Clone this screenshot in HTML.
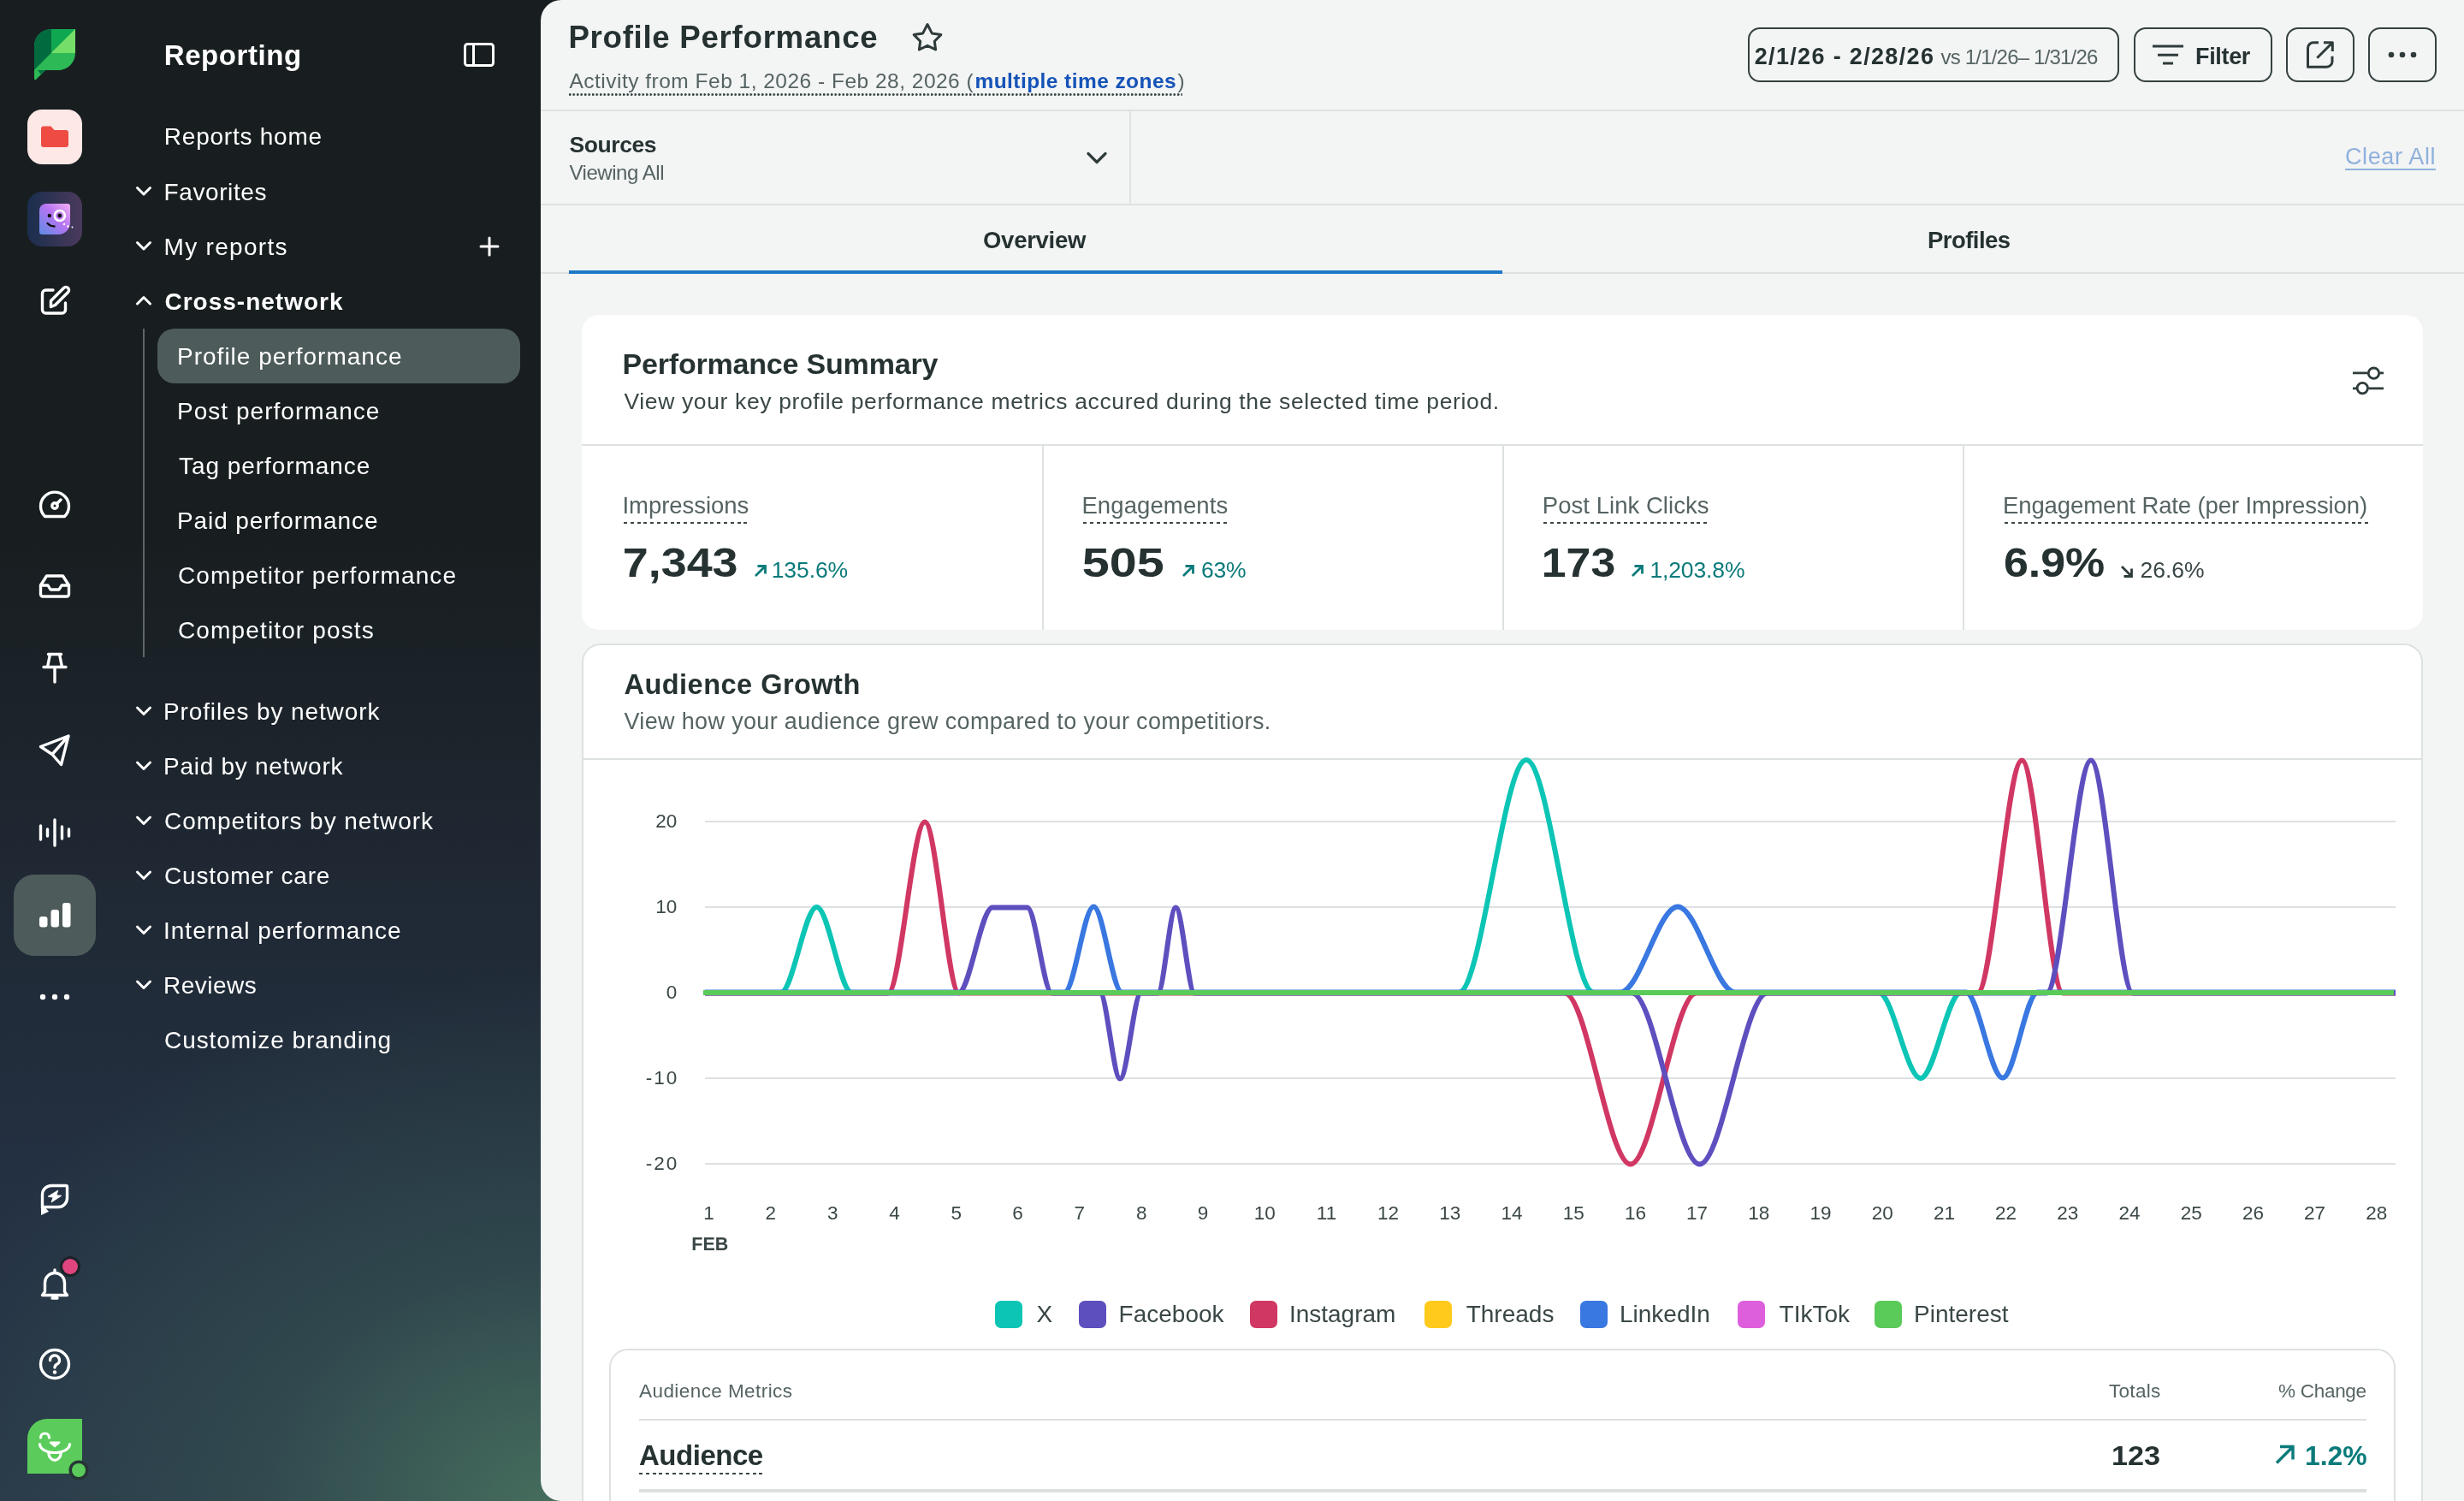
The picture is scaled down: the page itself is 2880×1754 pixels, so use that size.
<!DOCTYPE html>
<html><head><meta charset="utf-8"><style>
html,body{margin:0;padding:0;width:2880px;height:1754px;overflow:hidden;background:#181e20;font-family:"Liberation Sans",sans-serif}
.abs{position:absolute}
.t{position:absolute;white-space:nowrap;line-height:1}
.btn{position:absolute;box-sizing:border-box;border:2px solid #364141;border-radius:14px}
.hr{position:absolute;background:#dde1e1}
.dots{position:absolute;height:3px;background-image:radial-gradient(circle at 1.2px 1.5px,#3a4646 1.15px,rgba(58,70,70,0) 1.6px);background-size:4.5px 3px;background-repeat:repeat-x}
.dash{position:absolute;height:2px;background:repeating-linear-gradient(90deg,#3a4646 0 4px,rgba(0,0,0,0) 4px 7.8px)}
.sw{position:absolute;width:32px;height:32px;border-radius:7px;top:1520px}

</style></head><body>
<!-- sidebar background -->
<div class="abs" style="left:0;top:0;width:660px;height:1754px;background:
 radial-gradient(ellipse 760px 620px at 640px 1754px, rgba(74,118,96,0.85) 0%, rgba(60,96,86,0.45) 45%, rgba(40,60,70,0) 100%),
 linear-gradient(to bottom, #181e20 0%, #181e20 36%, #1f2833 58%, #243143 80%, #283649 100%);"></div>

<!-- logo -->
<svg class="abs" style="left:0;top:0" width="130" height="1754" viewBox="0 0 130 1754">
 <defs><clipPath id="lg"><path d="M40,54 A20,20 0 0 1 60,34 H88 V62 A20,20 0 0 1 68,82 H53 L42.5,92.5 Q40,95 40,91 Z"/></clipPath></defs>
 <g clip-path="url(#lg)">
  <rect x="30" y="30" width="70" height="70" fill="#2cb956"/>
  <polygon points="30,30 60,30 60,61.7 30,91.7" fill="#006b3f"/>
  <polygon points="60,30 92,30 92,30 60,61.7" fill="#0fa750"/>
  <polygon points="92,30 92,62 60,62 60,61.7" fill="#75de69"/>
  <polygon points="44,82 53,82 48,87" fill="#00713f"/>
 </g>
 <!-- red folder tile -->
 <rect x="32" y="128" width="64" height="64" rx="17" fill="#fde8e6"/>
 <path d="M48,150.5 a3,3 0 0 1 3,-3 H59.5 L63.5,152 H77 a3,3 0 0 1 3,3 V169 a3,3 0 0 1 -3,3 H51 a3,3 0 0 1 -3,-3 Z" fill="#ee4c43"/>
 <!-- purple tile -->
 <defs>
  <linearGradient id="pt" x1="0" y1="0" x2="1" y2="0"><stop offset="0" stop-color="#1a2e4d"/><stop offset="1" stop-color="#4b3a5c"/></linearGradient>
  <linearGradient id="pf" x1="0" y1="1" x2="1" y2="0"><stop offset="0" stop-color="#5c8ee6"/><stop offset="0.55" stop-color="#b773f2"/><stop offset="1" stop-color="#f0b0f0"/></linearGradient>
 </defs>
 <rect x="32" y="224" width="64" height="64" rx="17" fill="url(#pt)"/>
 <path d="M46,246 a8,8 0 0 1 8,-8 H79 a3,3 0 0 1 3,3 V260 a14,14 0 0 1 -14,14 H49 a3,3 0 0 1 -3,-3 Z" fill="url(#pf)"/>
 <circle cx="57.8" cy="252" r="2.2" fill="#111"/>
 <circle cx="69.8" cy="252" r="6" fill="none" stroke="#fff" stroke-width="2.6"/>
 <circle cx="69.8" cy="252" r="2.4" fill="#111"/>
 <path d="M55.5,261 Q59,264.5 63.5,264.5" fill="none" stroke="#111" stroke-width="2.4" stroke-linecap="round"/>
 <circle cx="75" cy="262" r="1.3" fill="#fff"/><circle cx="79.5" cy="264.5" r="1.3" fill="#fff"/><circle cx="84.5" cy="265.5" r="1" fill="#fff"/>
 <g fill="none" stroke="#fff" stroke-width="3.4" stroke-linecap="round" stroke-linejoin="round">
  <!-- compose -->
  <path d="M62,339 H53.5 a4,4 0 0 0 -4,4 V362 a4,4 0 0 0 4,4 H72.5 a4,4 0 0 0 4,-4 V354"/>
  <path d="M59.5,358.5 V351.5 L74.5,336.5 a3.5,3.5 0 0 1 5,5 L64.5,356.5 Z"/>
  <!-- gauge -->
  <path d="M52.5,603.5 H75.5 A16.5,16.5 0 1 0 52.5,603.5 Z"/>
  <circle cx="64" cy="591" r="3.2"/>
  <path d="M66.5,588.5 L71,584"/>
  <!-- inbox -->
  <path d="M47.5,684 L54.5,673 H73.5 L80.5,684 V694.5 a2.5,2.5 0 0 1 -2.5,2.5 H50 a2.5,2.5 0 0 1 -2.5,-2.5 Z"/>
  <path d="M47.5,684 H56 L59,689 H69 L72,684 H80.5"/>
  <!-- pin -->
  <path d="M56.5,764.5 H71.5 M58.5,764.5 L55.5,779.5 M69.5,764.5 L72.5,779.5 M51,779.5 H77 M64,779.5 V797"/>
  <!-- send -->
  <path d="M47.5,872.5 L80,860 L71.5,893.5 L61,881.5 Z M61,881.5 L80,860"/>
  <!-- waveform -->
  <path d="M47.5,965 V981 M55.5,969 V977 M64,958 V988 M72.5,966 V980 M80.5,969 V977"/>
  <!-- lightning chat -->
  <path d="M49.5,1412 V1396 a10.5,10.5 0 0 1 10.5,-10.5 H77 a1.5,1.5 0 0 1 1.5,1.5 V1400 a10.5,10.5 0 0 1 -10.5,10.5 H50"/>
  <!-- bell -->
  <path d="M49.5,1513.5 H78.5 L75.5,1509.5 V1499 a11.5,11.5 0 0 0 -23,0 V1509.5 Z M64,1484 V1487 M61,1517 H67"/>
  <!-- help -->
  <circle cx="64" cy="1594" r="16.5"/>
  <path d="M58.5,1589.5 a5.5,5.5 0 1 1 8,4.8 Q64,1595.8 64,1598"/>
 </g>
 <path d="M67.8,1391 L56,1398.2 L62,1399.2 L60,1405 L72,1397.2 L66,1396.8 Z" fill="#fff" stroke="#fff" stroke-width="0.8" stroke-linejoin="round"/>
 <path d="M48,1410.5 L53.5,1412 L57,1415.8 L48,1420 Z" fill="#fff"/>
 <circle cx="64" cy="1603.5" r="2.2" fill="#fff"/>
 <!-- bell dot -->
 <circle cx="82" cy="1480" r="12" fill="#1b2329"/>
 <circle cx="82" cy="1480" r="9" fill="#e0457f"/>
 <!-- active tile -->
 <rect x="16" y="1022" width="96" height="95" rx="24" fill="#4e5b5b"/>
 <rect x="46" y="1071" width="9.5" height="12.5" rx="3" fill="#fff"/>
 <rect x="59.5" y="1063" width="9.5" height="20.5" rx="3" fill="#fff"/>
 <rect x="73" y="1055" width="9.5" height="28.5" rx="3" fill="#fff"/>
 <!-- dots -->
 <circle cx="50" cy="1165" r="3.2" fill="#fff"/><circle cx="64" cy="1165" r="3.2" fill="#fff"/><circle cx="78" cy="1165" r="3.2" fill="#fff"/>
 <!-- avatar -->
 <path d="M32,1681 a23,23 0 0 1 23,-23 H96 V1705 a17,17 0 0 1 -17,17 H32 Z" fill="#5bcc5b"/>
 <g fill="none" stroke="#fff" stroke-width="3.2" stroke-linecap="round">
  <path d="M47.5,1680 a5,5 0 0 1 10,0"/>
  <path d="M46.5,1687.5 a17.5,10 0 0 0 35,0"/>
  <path d="M56.8,1697.8 a7.2,8.5 0 0 0 14.4,0"/>
 </g>
 <path d="M58.5,1684.5 H70 Q71,1685 70,1686.5 L64,1691.5 L58,1686.5 Q57.5,1685 58.5,1684.5 Z" fill="#fff"/>
 <circle cx="92" cy="1718" r="11.5" fill="#263436"/>
 <circle cx="92" cy="1718" r="8" fill="#5acb5a"/>
</svg>

<!-- sidebar nav decorations -->
<svg class="abs" style="left:130px;top:0" width="500" height="1300" viewBox="130 0 500 1300">
 <g fill="none" stroke="#fff" stroke-width="3" stroke-linecap="round" stroke-linejoin="round">
  <rect x="543.5" y="51.5" width="33" height="25" rx="3"/>
  <path d="M553.5,52 V76"/>
  <path d="M160.5,219.5 L168,227 L175.5,219.5"/>
  <path d="M160.5,283.5 L168,291 L175.5,283.5"/>
  <path d="M160.5,355 L168,347.5 L175.5,355"/>
  <path d="M572,278 V298 M562,288 H582"/>
  <path d="M160.5,827 L168,834.5 L175.5,827"/>
  <path d="M160.5,891 L168,898.5 L175.5,891"/>
  <path d="M160.5,955 L168,962.5 L175.5,955"/>
  <path d="M160.5,1019 L168,1026.5 L175.5,1019"/>
  <path d="M160.5,1083 L168,1090.5 L175.5,1083"/>
  <path d="M160.5,1147 L168,1154.5 L175.5,1147"/>
 </g>
 <rect x="167" y="384" width="2" height="384" fill="#5d6669"/>
 <rect x="184" y="384" width="424" height="64" rx="20" fill="#4e5b5b"/>
</svg>

<!-- main panel -->
<div class="abs" style="left:632px;top:0;width:2248px;height:1754px;background:#f3f4f4;border-radius:24px 0 0 24px"></div>
<div class="hr" style="left:632px;top:128px;width:2248px;height:2px"></div>
<div class="hr" style="left:1320px;top:130px;width:2px;height:108px"></div>
<div class="hr" style="left:632px;top:238px;width:2248px;height:2px"></div>
<div class="hr" style="left:632px;top:318px;width:2248px;height:2px"></div>
<div class="abs" style="left:665px;top:316px;width:1091px;height:4px;background:#1f78c6"></div>
<div class="dots" style="left:665px;top:109px;width:717px"></div>

<!-- header buttons -->
<div class="btn" style="left:2043px;top:32px;width:434px;height:64px"></div>
<div class="btn" style="left:2494px;top:32px;width:162px;height:64px"></div>
<div class="btn" style="left:2672px;top:32px;width:80px;height:64px"></div>
<div class="btn" style="left:2768px;top:32px;width:80px;height:64px"></div>
<svg class="abs" style="left:0;top:0" width="2880" height="330" viewBox="0 0 2880 330">
 <g fill="none" stroke="#2f3b3b" stroke-width="3" stroke-linejoin="round">
  <path d="M1084,28.5 L1089.3,38.9 L1099.8,40.6 L1092.3,48.3 L1093.6,58 L1084,53.3 L1074.4,58 L1075.7,48.3 L1068.2,40.6 L1078.7,38.9 Z" stroke-linejoin="round"/>
  <path d="M2516,54 H2552 M2522,64.3 H2546 M2528,74 H2540"/>
  <path d="M2710,49.7 H2704 a6.5,6.5 0 0 0 -6.5,6.5 V78.2 H2719.5 a6.5,6.5 0 0 0 6.5,-6.5 V65.8"/>
  <path d="M2716,49.7 H2726.3 V60 M2726.3,49.7 L2708.3,67.7"/>
  <path d="M1272,179.5 L1282,189.5 L1292,179.5" stroke-width="3.2" stroke-linecap="round"/>
 </g>
 <circle cx="2795" cy="64" r="3.3" fill="#2f3b3b"/><circle cx="2808" cy="64" r="3.3" fill="#2f3b3b"/><circle cx="2821" cy="64" r="3.3" fill="#2f3b3b"/>
 <rect x="2741" y="197" width="106" height="2" fill="#8fb1dc"/>
</svg>

<!-- performance summary card -->
<div class="abs" style="left:680px;top:368px;width:2152px;height:368px;background:#fff;border-radius:20px"></div>
<div class="hr" style="left:680px;top:519px;width:2152px;height:2px"></div>
<div class="hr" style="left:1218px;top:521px;width:2px;height:215px"></div>
<div class="hr" style="left:1756px;top:521px;width:2px;height:215px"></div>
<div class="hr" style="left:2294px;top:521px;width:2px;height:215px"></div>
<div class="dash" style="left:729px;top:610px;width:146px"></div>
<div class="dash" style="left:1266px;top:610px;width:169px"></div>
<div class="dash" style="left:1804px;top:610px;width:194px"></div>
<div class="dash" style="left:2343px;top:610px;width:425px"></div>
<svg class="abs" style="left:0;top:330px" width="2880" height="560" viewBox="0 330 2880 560">
 <g fill="none" stroke="#2f3b3b" stroke-width="2.8">
  <path d="M2750,435.8 H2767.3 M2781.7,435.8 H2786 M2750,453.8 H2754 M2768.5,453.8 H2786"/>
  <circle cx="2774.5" cy="436.2" r="6.2"/><circle cx="2761.3" cy="453.6" r="6.2"/>
  <path d="M2746,810.8 H2763 M2777.5,810.8 H2782 M2746,828.9 H2750 M2764.5,828.9 H2782"/>
  <circle cx="2770.3" cy="811.3" r="6.2"/><circle cx="2757.4" cy="828.6" r="6.2"/>
 </g>
 <g fill="none" stroke="#0b7a7a" stroke-width="2.8">
  <path d="M883,673 L894,662 M885.5,661.5 H894.5 V670.5"/>
  <path d="M1383,673 L1394,662 M1385.5,661.5 H1394.5 V670.5"/>
  <path d="M1908,673 L1919,662 M1910.5,661.5 H1919.5 V670.5"/>
 </g>
 <g fill="none" stroke="#2f3b3b" stroke-width="2.8">
  <path d="M2480,662 L2491,673 M2482.5,673.5 H2491.5 V664.5"/>
 </g>
</svg>

<!-- audience growth card -->
<div class="abs" style="left:680px;top:752px;width:2152px;height:1100px;background:#fff;border:2px solid #dde1e1;border-radius:22px;box-sizing:border-box"></div>
<div class="hr" style="left:682px;top:886px;width:2148px;height:2px"></div>

<!-- legend swatches -->
<div class="sw" style="left:1163px;background:#0cc5b5"></div>
<div class="sw" style="left:1261px;background:#5e4fbf"></div>
<div class="sw" style="left:1461px;background:#d13763"></div>
<div class="sw" style="left:1665px;background:#ffca1c"></div>
<div class="sw" style="left:1847px;background:#3977e1"></div>
<div class="sw" style="left:2031px;background:#de5fdc"></div>
<div class="sw" style="left:2191px;background:#5aca59"></div>

<!-- table -->
<div class="abs" style="left:712px;top:1576px;width:2088px;height:400px;border:2px solid #dde1e1;border-radius:22px;box-sizing:border-box"></div>
<div class="hr" style="left:747px;top:1658px;width:2019px;height:2px"></div>
<div class="abs" style="left:747px;top:1740px;width:2019px;height:4px;background:#dcdfe0"></div>
<div class="dash" style="left:747px;top:1721px;width:146px"></div>
<svg class="abs" style="left:2600px;top:1640px" width="120" height="100" viewBox="2600 1640 120 100">
 <g fill="none" stroke="#0b7a7a" stroke-width="3.4">
  <path d="M2661,1709.5 L2679,1691.5 M2665,1690.5 H2680 V1705.5"/>
 </g>
</svg>

<svg class="abs" style="left:0;top:0" width="2880" height="1754" viewBox="0 0 2880 1754">
<rect x="824" y="959" width="1976" height="2" fill="#dde1e1"/>
<rect x="824" y="1059" width="1976" height="2" fill="#dde1e1"/>
<rect x="824" y="1259" width="1976" height="2" fill="#dde1e1"/>
<rect x="824" y="1359" width="1976" height="2" fill="#dde1e1"/>
<path d="M824.0,1160.0 L912.6,1160.0 C926.6,1160.0 940.6,1060.0 954.6,1060.0 C968.3,1060.0 981.9,1160.0 995.6,1160.0 L1705.0,1160.0 C1731.3,1160.0 1757.7,888.0 1784.0,888.0 C1810.3,888.0 1836.7,1160.0 1863.0,1160.0 L2195.9,1160.0 C2212.2,1160.0 2228.6,1260.0 2244.9,1260.0 C2260.6,1260.0 2276.2,1160.0 2291.9,1160.0 L2800.0,1160.0" fill="none" stroke="#0cc5b5" stroke-width="6" stroke-linejoin="round"/>
<path d="M824.0,1160.5 L1038.0,1160.5 C1052.3,1160.5 1066.7,960.5 1081.0,960.5 C1094.3,960.5 1107.7,1160.5 1121.0,1160.5 L1828.8,1160.5 C1854.5,1160.5 1880.1,1360.5 1905.8,1360.5 C1931.5,1360.5 1957.1,1160.5 1982.8,1160.5 L2311.3,1160.5 C2328.6,1160.5 2346.0,888.5 2363.3,888.5 C2379.3,888.5 2395.3,1160.5 2411.3,1160.5 L2800.0,1160.5" fill="none" stroke="#d13763" stroke-width="6" stroke-linejoin="round"/>
<path d="M824.0,1159.5 L1244.3,1159.5 C1255.6,1159.5 1267.0,1059.5 1278.3,1059.5 C1289.3,1059.5 1300.3,1159.5 1311.3,1159.5 L1894.0,1159.5 C1916.3,1159.5 1938.7,1059.5 1961.0,1059.5 C1983.3,1059.5 2005.7,1159.5 2028.0,1159.5 L2297.8,1159.5 C2312.1,1159.5 2326.5,1259.5 2340.8,1259.5 C2354.5,1259.5 2368.1,1159.5 2381.8,1159.5 L2800.0,1159.5" fill="none" stroke="#3977e1" stroke-width="6" stroke-linejoin="round"/>
<path d="M824.0,1160.5 L1120.0,1160.5 C1133.3,1160.5 1146.7,1060.5 1160.0,1060.5 L1200.7,1060.5 C1210.3,1060.5 1219.9,1160.5 1229.5,1160.5 L1285.7,1160.5 C1293.5,1160.5 1301.4,1260.5 1309.2,1260.5 C1317.4,1260.5 1325.5,1160.5 1333.7,1160.5 L1353.3,1160.5 C1360.3,1160.5 1367.3,1060.5 1374.3,1060.5 C1381.6,1060.5 1389.0,1160.5 1396.3,1160.5 L1907.6,1160.5 C1933.9,1160.5 1960.3,1360.5 1986.6,1360.5 C2012.9,1360.5 2039.3,1160.5 2065.6,1160.5 L2392.0,1160.5 C2409.3,1160.5 2426.7,888.5 2444.0,888.5 C2460.3,888.5 2476.7,1160.5 2493.0,1160.5 L2800.0,1160.5" fill="none" stroke="#5e4fbf" stroke-width="6" stroke-linejoin="round"/>
<rect x="822" y="1157" width="1976" height="6" fill="#5aca59"/>
</svg>
<div class="abs" style="left:0;top:0;width:2880px;height:1754px;will-change:transform">
<div class="t" style="left:191.8px;top:48.4px;font-size:33px;color:#ffffff;font-weight:bold;letter-spacing:0.57px">Reporting</div>
<div class="t" style="left:191.8px;top:146.3px;font-size:28px;color:#ffffff;letter-spacing:0.77px">Reports home</div>
<div class="t" style="left:191.5px;top:210.8px;font-size:28px;color:#ffffff;letter-spacing:0.61px">Favorites</div>
<div class="t" style="left:191.5px;top:274.7px;font-size:28px;color:#ffffff;letter-spacing:1.31px">My reports</div>
<div class="t" style="left:192.5px;top:338.7px;font-size:28px;color:#ffffff;font-weight:bold;letter-spacing:1.00px">Cross-network</div>
<div class="t" style="left:207.0px;top:402.9px;font-size:28px;color:#ffffff;letter-spacing:1.01px">Profile performance</div>
<div class="t" style="left:207.0px;top:466.8px;font-size:28px;color:#ffffff;letter-spacing:1.03px">Post performance</div>
<div class="t" style="left:209.0px;top:530.8px;font-size:28px;color:#ffffff;letter-spacing:0.94px">Tag performance</div>
<div class="t" style="left:207.0px;top:594.8px;font-size:28px;color:#ffffff;letter-spacing:0.90px">Paid performance</div>
<div class="t" style="left:208.0px;top:658.8px;font-size:28px;color:#ffffff;letter-spacing:1.10px">Competitor performance</div>
<div class="t" style="left:208.0px;top:722.8px;font-size:28px;color:#ffffff;letter-spacing:1.14px">Competitor posts</div>
<div class="t" style="left:191.0px;top:817.9px;font-size:28px;color:#ffffff;letter-spacing:0.88px">Profiles by network</div>
<div class="t" style="left:191.0px;top:881.9px;font-size:28px;color:#ffffff;letter-spacing:0.73px">Paid by network</div>
<div class="t" style="left:192.0px;top:946.1px;font-size:28px;color:#ffffff;letter-spacing:0.95px">Competitors by network</div>
<div class="t" style="left:192.0px;top:1010.1px;font-size:28px;color:#ffffff;letter-spacing:0.81px">Customer care</div>
<div class="t" style="left:191.0px;top:1074.1px;font-size:28px;color:#ffffff;letter-spacing:1.01px">Internal performance</div>
<div class="t" style="left:191.0px;top:1138.1px;font-size:28px;color:#ffffff;letter-spacing:0.50px">Reviews</div>
<div class="t" style="left:192.0px;top:1202.0px;font-size:28px;color:#ffffff;letter-spacing:0.94px">Customize branding</div>
<div class="t" style="left:664.4px;top:25.5px;font-size:36.7px;color:#263232;font-weight:bold;letter-spacing:0.70px">Profile Performance</div>
<div class="t" style="left:665.5px;top:83.3px;font-size:24.5px;color:#566363;letter-spacing:0.49px">Activity from Feb 1, 2026 - Feb 28, 2026 (</div>
<div class="t" style="left:1139.5px;top:83.3px;font-size:24.5px;color:#1553b8;font-weight:bold;letter-spacing:0.43px">multiple time zones</div>
<div class="t" style="left:1376.5px;top:83.3px;font-size:24.5px;color:#566363">)</div>
<div class="t" style="left:665.5px;top:155.6px;font-size:26.5px;color:#263232;font-weight:bold;letter-spacing:-0.42px">Sources</div>
<div class="t" style="left:665.5px;top:190.1px;font-size:24px;color:#566363;letter-spacing:-0.46px">Viewing All</div>
<div class="t" style="left:1149.0px;top:266.7px;font-size:27.5px;color:#263232;font-weight:bold;letter-spacing:-0.27px">Overview</div>
<div class="t" style="left:2252.9px;top:267.1px;font-size:27.5px;color:#263232;font-weight:bold;letter-spacing:-0.52px">Profiles</div>
<div class="t" style="left:2741.0px;top:170.1px;font-size:27px;color:#8fb1dc;letter-spacing:0.62px">Clear All</div>
<div class="t" style="left:2050.7px;top:52.7px;font-size:27px;color:#263232;font-weight:bold;letter-spacing:1.34px">2/1/26 - 2/28/26</div>
<div class="t" style="left:2268.5px;top:55.3px;font-size:24px;color:#566363;letter-spacing:-0.80px">vs 1/1/26– 1/31/26</div>
<div class="t" style="left:2566.0px;top:52.9px;font-size:27px;color:#263232;font-weight:bold;letter-spacing:-0.34px">Filter</div>
<div class="t" style="left:727.5px;top:408.2px;font-size:34px;color:#263232;font-weight:bold;letter-spacing:-0.19px">Performance Summary</div>
<div class="t" style="left:729.5px;top:455.6px;font-size:26.5px;color:#3b4747;letter-spacing:0.63px">View your key profile performance metrics accured during the selected time period.</div>
<div class="t" style="left:727.5px;top:576.7px;font-size:27.5px;color:#566363;letter-spacing:-0.05px">Impressions</div>
<div class="t" style="left:1264.4px;top:576.7px;font-size:27.5px;color:#566363;letter-spacing:0.11px">Engagements</div>
<div class="t" style="left:1802.8px;top:576.7px;font-size:27.5px;color:#566363;letter-spacing:0.04px">Post Link Clicks</div>
<div class="t" style="left:2341.0px;top:576.7px;font-size:27.5px;color:#566363;letter-spacing:-0.11px">Engagement Rate (per Impression)</div>
<div class="t" style="left:727.5px;top:633.1px;font-size:48.5px;color:#263232;font-weight:bold;transform:scaleX(1.1107);transform-origin:2.0px 0">7,343</div>
<div class="t" style="left:1265.4px;top:633.1px;font-size:48.5px;color:#263232;font-weight:bold;transform:scaleX(1.1856);transform-origin:1.0px 0">505</div>
<div class="t" style="left:1801.8px;top:633.1px;font-size:48.5px;color:#263232;font-weight:bold;transform:scaleX(1.0683);transform-origin:3.0px 0">173</div>
<div class="t" style="left:2342.0px;top:633.1px;font-size:48.5px;color:#263232;font-weight:bold;transform:scaleX(1.0699);transform-origin:1.0px 0">6.9%</div>
<div class="t" style="left:901.7px;top:652.9px;font-size:26.5px;color:#0b7a7a;letter-spacing:-0.08px">135.6%</div>
<div class="t" style="left:1404.0px;top:652.9px;font-size:26.5px;color:#0b7a7a;letter-spacing:-0.24px">63%</div>
<div class="t" style="left:1928.4px;top:652.9px;font-size:26.5px;color:#0b7a7a;letter-spacing:-0.12px">1,203.8%</div>
<div class="t" style="left:2501.5px;top:652.9px;font-size:26.5px;color:#3b4747;letter-spacing:-0.02px">26.6%</div>
<div class="t" style="left:729.5px;top:783.5px;font-size:32.5px;color:#263232;font-weight:bold;letter-spacing:0.48px">Audience Growth</div>
<div class="t" style="left:729.5px;top:830.1px;font-size:27px;color:#566363;letter-spacing:0.34px">View how your audience grew compared to your competitiors.</div>
<div class="t" style="left:766.2px;top:949.2px;font-size:22.5px;color:#3b4747">20</div>
<div class="t" style="left:766.2px;top:1049.2px;font-size:22.5px;color:#3b4747">10</div>
<div class="t" style="left:778.7px;top:1149.2px;font-size:22.5px;color:#3b4747">0</div>
<div class="t" style="left:754.7px;top:1249.2px;font-size:22.5px;color:#3b4747;letter-spacing:2.00px">-10</div>
<div class="t" style="left:754.7px;top:1349.2px;font-size:22.5px;color:#3b4747;letter-spacing:2.00px">-20</div>
<div class="t" style="left:822.2px;top:1406.9px;font-size:22.5px;color:#3b4747">1</div>
<div class="t" style="left:894.4px;top:1406.9px;font-size:22.5px;color:#3b4747">2</div>
<div class="t" style="left:967.1px;top:1406.9px;font-size:22.5px;color:#3b4747">3</div>
<div class="t" style="left:1039.3px;top:1406.9px;font-size:22.5px;color:#3b4747">4</div>
<div class="t" style="left:1111.5px;top:1406.9px;font-size:22.5px;color:#3b4747">5</div>
<div class="t" style="left:1183.2px;top:1406.9px;font-size:22.5px;color:#3b4747">6</div>
<div class="t" style="left:1255.4px;top:1406.9px;font-size:22.5px;color:#3b4747">7</div>
<div class="t" style="left:1328.1px;top:1406.9px;font-size:22.5px;color:#3b4747">8</div>
<div class="t" style="left:1399.8px;top:1406.9px;font-size:22.5px;color:#3b4747">9</div>
<div class="t" style="left:1465.7px;top:1406.9px;font-size:22.5px;color:#3b4747">10</div>
<div class="t" style="left:1538.8px;top:1406.9px;font-size:22.5px;color:#3b4747">11</div>
<div class="t" style="left:1610.1px;top:1406.9px;font-size:22.5px;color:#3b4747">12</div>
<div class="t" style="left:1682.3px;top:1406.9px;font-size:22.5px;color:#3b4747">13</div>
<div class="t" style="left:1754.5px;top:1406.9px;font-size:22.5px;color:#3b4747">14</div>
<div class="t" style="left:1826.7px;top:1406.9px;font-size:22.5px;color:#3b4747">15</div>
<div class="t" style="left:1898.9px;top:1406.9px;font-size:22.5px;color:#3b4747">16</div>
<div class="t" style="left:1971.1px;top:1406.9px;font-size:22.5px;color:#3b4747">17</div>
<div class="t" style="left:2043.3px;top:1406.9px;font-size:22.5px;color:#3b4747">18</div>
<div class="t" style="left:2115.5px;top:1406.9px;font-size:22.5px;color:#3b4747">19</div>
<div class="t" style="left:2187.7px;top:1406.9px;font-size:22.5px;color:#3b4747">20</div>
<div class="t" style="left:2259.9px;top:1406.9px;font-size:22.5px;color:#3b4747">21</div>
<div class="t" style="left:2332.1px;top:1406.9px;font-size:22.5px;color:#3b4747">22</div>
<div class="t" style="left:2404.3px;top:1406.9px;font-size:22.5px;color:#3b4747">23</div>
<div class="t" style="left:2476.5px;top:1406.9px;font-size:22.5px;color:#3b4747">24</div>
<div class="t" style="left:2548.7px;top:1406.9px;font-size:22.5px;color:#3b4747">25</div>
<div class="t" style="left:2620.9px;top:1406.9px;font-size:22.5px;color:#3b4747">26</div>
<div class="t" style="left:2693.1px;top:1406.9px;font-size:22.5px;color:#3b4747">27</div>
<div class="t" style="left:2765.3px;top:1406.9px;font-size:22.5px;color:#3b4747">28</div>
<div class="t" style="left:808.3px;top:1443.8px;font-size:21.5px;color:#3b4747;font-weight:bold">FEB</div>
<div class="t" style="left:1211.5px;top:1521.7px;font-size:28px;color:#3b4747">X</div>
<div class="t" style="left:1307.6px;top:1521.7px;font-size:28px;color:#3b4747">Facebook</div>
<div class="t" style="left:1506.9px;top:1521.7px;font-size:28px;color:#3b4747">Instagram</div>
<div class="t" style="left:1713.7px;top:1521.7px;font-size:28px;color:#3b4747">Threads</div>
<div class="t" style="left:1893.0px;top:1521.7px;font-size:28px;color:#3b4747">LinkedIn</div>
<div class="t" style="left:2079.6px;top:1521.7px;font-size:28px;color:#3b4747">TIkTok</div>
<div class="t" style="left:2237.0px;top:1521.7px;font-size:28px;color:#3b4747;letter-spacing:0.01px">Pinterest</div>
<div class="t" style="left:747.0px;top:1614.7px;font-size:22.5px;color:#566363;letter-spacing:0.43px">Audience Metrics</div>
<div class="t" style="left:2465.0px;top:1614.9px;font-size:22.5px;color:#566363;letter-spacing:0.29px">Totals</div>
<div class="t" style="left:2663.0px;top:1614.9px;font-size:22.5px;color:#566363;letter-spacing:-0.28px">% Change</div>
<div class="t" style="left:747.0px;top:1684.1px;font-size:33px;color:#263232;font-weight:bold;letter-spacing:-0.48px">Audience</div>
<div class="t" style="left:2468.3px;top:1685.6px;font-size:31px;color:#263232;font-weight:bold;transform:scaleX(1.1034);transform-origin:1.0px 0">123</div>
<div class="t" style="left:2693.5px;top:1685.6px;font-size:31px;color:#0b7a7a;font-weight:bold;transform:scaleX(1.0290);transform-origin:1.0px 0">1.2%</div>
</div>
</body></html>
